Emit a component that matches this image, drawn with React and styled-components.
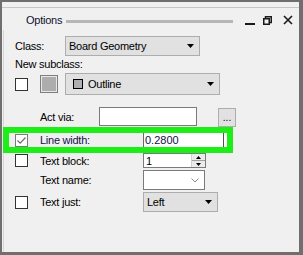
import styled, { createGlobalStyle } from "styled-components";

const GlobalStyle = createGlobalStyle`
  body {
    margin: 0;
    background: #6f6f6f;
    font-family: "Liberation Sans", Arial, sans-serif;
  }
`;

const Frame = styled.div`
  width: 303px;
  height: 255px;
  box-sizing: border-box;
  border-style: solid;
  border-color: #6f6f6f;
  border-width: 2px 4px 3px 2px;
  background: #f0f0f0;
  display: flex;
  flex-direction: column;
  font-size: 11px;
  letter-spacing: -0.25px;
  color: #000;
`;

const TopStrip = styled.div`
  height: 5px;
  border-bottom: 1px solid #c6c6c6;
`;

const TitleBar = styled.div`
  height: 22px;
  box-sizing: border-box;
  padding: 2px 6px 0 24px;
  display: flex;
  align-items: center;
`;

const TitleText = styled.span`
  font-size: 11px;
  color: #101030;
`;

const TitleRule = styled.div`
  flex: 1;
  height: 3px;
  background: #b6b6b6;
  margin: 2px 12px 0 4px;
`;

const TitleIcons = styled.div`
  display: flex;
  align-items: center;
  gap: 8px;
`;

const RestoreIcon = styled.svg`
  margin-right: 3px;
`;

const Panel = styled.div`
  flex: 1;
  margin-left: 1px;
  border-left: 1px solid #d6d6d6;
  display: flex;
  flex-direction: column;
`;

const Row = styled.div`
  display: flex;
  align-items: center;
  height: ${(p) => p.$h}px;
  margin-top: ${(p) => p.$top}px;
  padding-left: 11px;
`;

const HighlightRow = styled.div`
  display: flex;
  align-items: center;
  box-sizing: border-box;
  width: 230px;
  height: 26px;
  margin-left: -1px;
  border: 6px solid #1eee18;
  padding-left: 6px;
`;

const Lead = styled.div`
  width: 25px;
  flex: none;
  display: flex;
  align-items: center;
`;

const Label = styled.span`
  width: ${(p) => p.$w}px;
  flex: none;
  white-space: nowrap;
  color: ${(p) => p.$color || "#000"};
`;

const Check = styled.span`
  box-sizing: border-box;
  width: 13px;
  height: 13px;
  border: 1px solid ${(p) => (p.$checked ? "#7a7a7a" : "#333")};
  background: #fff;
  display: flex;
  align-items: center;
  justify-content: center;
`;

const Swatch = styled.span`
  box-sizing: border-box;
  width: 18px;
  height: 18px;
  margin-left: 12px;
  margin-right: 7px;
  border: 1px solid #7d7d7d;
  box-shadow: inset 0 0 0 1px #e8e8e8;
  background: #adadad;
`;

const Combo = styled.div`
  box-sizing: border-box;
  width: ${(p) => p.$w}px;
  height: ${(p) => p.$h}px;
  background: #e1e1e1;
  border: 1px solid #adadad;
  display: flex;
  align-items: center;
  padding: 0 5px 0 ${(p) => p.$pad || 2}px;
  flex: none;
`;

const ComboText = styled.span`
  flex: 1;
  white-space: nowrap;
`;

const MiniSwatch = styled.span`
  box-sizing: border-box;
  width: 10px;
  height: 10px;
  border: 1px solid #000;
  background: #b0b0b0;
  margin-right: 5px;
`;

const TextBox = styled.div`
  box-sizing: border-box;
  width: ${(p) => p.$w}px;
  height: ${(p) => p.$h}px;
  align-self: ${(p) => p.$self || "center"};
  background: #fff;
  border: 1px solid #7a7a7a;
  flex: none;
  display: flex;
  align-items: center;
  justify-content: flex-end;
  padding-right: 5px;
`;

const ValueBox = styled.div`
  box-sizing: border-box;
  width: 84px;
  height: 14px;
  background: #fff;
  border-left: 1px solid #6a6a6a;
  box-shadow: inset -3px 0 0 #fff, inset -4px 0 0 #505050;
  padding-left: 1px;
  display: flex;
  align-items: center;
  color: #10104a;
  letter-spacing: 0;
`;

const DotsButton = styled.div`
  box-sizing: border-box;
  width: 18px;
  height: 19px;
  margin-left: 21px;
  margin-top: 1px;
  background: #e1e1e1;
  border: 1px solid #adadad;
  display: flex;
  align-items: flex-end;
  justify-content: center;
  padding-bottom: 3px;
  font-size: 10px;
  letter-spacing: 0;
  line-height: 1;
`;

const SpinBox = styled.div`
  box-sizing: border-box;
  width: 63px;
  height: 15px;
  background: #fff;
  border: 1px solid #7a7a7a;
  display: flex;
  align-items: center;
  padding-left: 2px;
  flex: none;
`;

const SpinButtons = styled.div`
  width: 13px;
  height: 100%;
  display: flex;
  flex-direction: column;
  border-left: 1px solid #d0d0d0;
`;

const SpinHalf = styled.div`
  flex: 1;
  background: #ececec;
  display: flex;
  align-items: center;
  justify-content: center;
  & + & {
    border-top: 1px solid #a0a0a0;
  }
`;

const Arrow = () => (
  <svg width="7" height="4" viewBox="0 0 7 4">
    <path d="M0 0H7L3.5 4Z" fill="#000" />
  </svg>
);

const Chevron = () => (
  <svg width="8" height="5" viewBox="0 0 8 5">
    <path d="M0.5 0.5L4 4L7.5 0.5" fill="none" stroke="#8a8a8a" strokeWidth="1" />
  </svg>
);

const CheckMark = () => (
  <svg width="11" height="11" viewBox="0 0 11 11">
    <path d="M1.5 5.5L4.2 8.2L9.5 2.5" fill="none" stroke="#6e6e6e" strokeWidth="1.2" />
  </svg>
);

function App() {
  return (
    <>
      <GlobalStyle />
      <Frame>
        <TopStrip />
        <TitleBar>
          <TitleText>Options</TitleText>
          <TitleRule />
          <TitleIcons>
            <svg width="10" height="12" viewBox="0 0 10 12">
              <rect x="0" y="9" width="10" height="2" fill="#1a1a1a" />
            </svg>
            <RestoreIcon width="9" height="9" viewBox="0 0 9 9">
              <path d="M2.5 2.5V0.75H8.25V6.5H6.5" fill="none" stroke="#1a1a1a" strokeWidth="1.5" />
              <rect x="0.75" y="2.75" width="5.5" height="5.5" fill="none" stroke="#1a1a1a" strokeWidth="1.5" />
            </RestoreIcon>
            <svg width="10" height="10" viewBox="0 0 10 10">
              <path d="M1 1L9 9M9 1L1 9" stroke="#1a1a1a" strokeWidth="1.6" />
            </svg>
          </TitleIcons>
        </TitleBar>
        <Panel>
          <Row $top={6} $h={20}>
            <Label $w={50}>Class:</Label>
            <Combo $w={135} $h={20} $pad={3}>
              <ComboText>Board Geometry</ComboText>
              <Arrow />
            </Combo>
          </Row>
          <Row $top={1} $h={14}>
            <Label $w={100}>New subclass:</Label>
          </Row>
          <Row $top={2} $h={22}>
            <Check />
            <Swatch />
            <Combo $w={155} $h={22} $pad={7}>
              <MiniSwatch />
              <ComboText>Outline</ComboText>
              <Arrow />
            </Combo>
          </Row>
          <Row $top={12} $h={20}>
            <Lead />
            <Label $w={59}>Act via:</Label>
            <TextBox $w={98} $h={19} $self="flex-start" />
            <DotsButton>...</DotsButton>
          </Row>
          <HighlightRow>
            <Lead>
              <Check $checked>
                <CheckMark />
              </Check>
            </Lead>
            <Label $w={103} $color="#10104a">Line width:</Label>
            <ValueBox>0.2800</ValueBox>
          </HighlightRow>
          <Row $top={0} $h={15}>
            <Lead>
              <Check />
            </Lead>
            <Label $w={103}>Text block:</Label>
            <SpinBox>
              <ComboText>1</ComboText>
              <SpinButtons>
                <SpinHalf>
                  <svg width="5" height="3" viewBox="0 0 5 3">
                    <path d="M0 3H5L2.5 0Z" fill="#000" />
                  </svg>
                </SpinHalf>
                <SpinHalf>
                  <svg width="5" height="3" viewBox="0 0 5 3">
                    <path d="M0 0H5L2.5 3Z" fill="#000" />
                  </svg>
                </SpinHalf>
              </SpinButtons>
            </SpinBox>
          </Row>
          <Row $top={2} $h={20}>
            <Lead />
            <Label $w={103}>Text name:</Label>
            <TextBox $w={62} $h={20}>
              <Chevron />
            </TextBox>
          </Row>
          <Row $top={2} $h={20}>
            <Lead>
              <Check />
            </Lead>
            <Label $w={103}>Text just:</Label>
            <Combo $w={75} $h={20} $pad={3}>
              <ComboText>Left</ComboText>
              <Arrow />
            </Combo>
          </Row>
        </Panel>
      </Frame>
    </>
  );
}

export default App;
